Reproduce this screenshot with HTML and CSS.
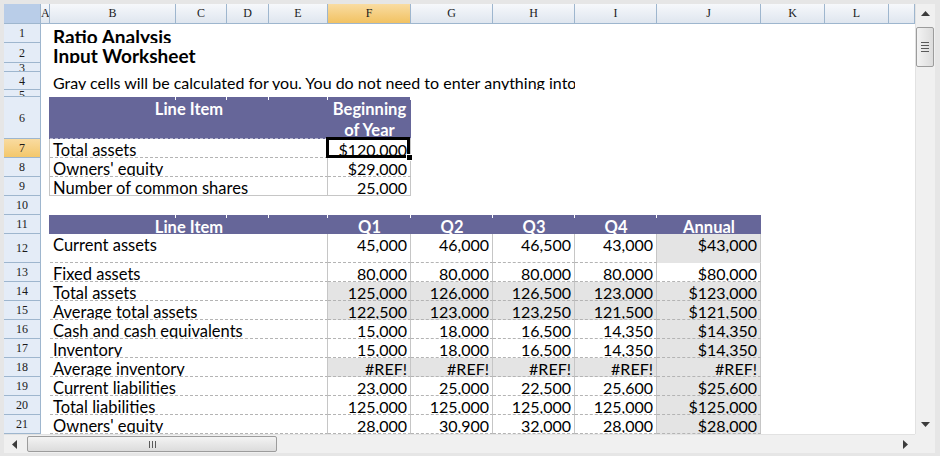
FILE: index.html
```html
<!DOCTYPE html>
<html>
<head>
<meta charset="utf-8">
<title>Ratio Analysis</title>
<link rel="stylesheet" href="styles.css">
</head>
<body>
<div class="window">
  <div class="sheet">
    <div class="row colheads">
      <div class="corner"></div>
      <div class="ch wA">A</div>
      <div class="ch wB">B</div>
      <div class="ch wC">C</div>
      <div class="ch wD">D</div>
      <div class="ch wE">E</div>
      <div class="ch wF sel">F</div>
      <div class="ch wG">G</div>
      <div class="ch wH">H</div>
      <div class="ch wI">I</div>
      <div class="ch wJ">J</div>
      <div class="ch wK">K</div>
      <div class="ch wL">L</div>
      <div class="ch wM"></div>
    </div>

    <div class="row h19">
      <div class="rh">1</div><div class="c wA"></div>
      <div class="c wBH title t1">Ratio Analysis</div>
    </div>
    <div class="row h20">
      <div class="rh">2</div><div class="c wA"></div>
      <div class="c wBH title t2">Input Worksheet</div>
    </div>
    <div class="row h9">
      <div class="rh tiny">3</div>
    </div>
    <div class="row h18">
      <div class="rh">4</div><div class="c wA"></div>
      <div class="c wBH note">Gray cells will be calculated for you. You do not need to enter anything into</div>
    </div>
    <div class="row h7">
      <div class="rh tiny">5</div>
    </div>
    <div class="row h42">
      <div class="rh">6</div><div class="c wA hA"></div>
      <div class="c wBE hd hticks">Line Item</div>
      <div class="c wF hd htick">Beginning<br>of Year</div>
    </div>
    <div class="row h19">
      <div class="rh rsel">7</div><div class="c wA tl"></div>
      <div class="c wBE lab">Total assets</div>
      <div class="c wF num">$120,000</div>
    </div>
    <div class="row h19">
      <div class="rh">8</div><div class="c wA tl"></div>
      <div class="c wBE lab">Owners' equity</div>
      <div class="c wF num">$29,000</div>
    </div>
    <div class="row h19">
      <div class="rh">9</div><div class="c wA tl"></div>
      <div class="c wBE lab last">Number of common shares</div>
      <div class="c wF num last">25,000</div>
    </div>
    <div class="row h19">
      <div class="rh">10</div>
    </div>
    <div class="row h19">
      <div class="rh">11</div><div class="c wA hA"></div>
      <div class="c wBE hd2 hticks">Line Item</div>
      <div class="c wF hd2 htick">Q1</div>
      <div class="c wG hd2 htick">Q2</div>
      <div class="c wH hd2 htick">Q3</div>
      <div class="c wI hd2 htick">Q4</div>
      <div class="c wJ hd2">Annual</div>
    </div>
    <div class="row h29">
      <div class="rh">12</div><div class="c wA"></div>
      <div class="c wBE lab">Current assets</div>
      <div class="c wF num">45,000</div>
      <div class="c wG num">46,000</div>
      <div class="c wH num">46,500</div>
      <div class="c wI num">43,000</div>
      <div class="c wJ num gr nob">$43,000</div>
    </div>
    <div class="row h19">
      <div class="rh">13</div><div class="c wA"></div>
      <div class="c wBE lab">Fixed assets</div>
      <div class="c wF num">80,000</div>
      <div class="c wG num">80,000</div>
      <div class="c wH num">80,000</div>
      <div class="c wI num">80,000</div>
      <div class="c wJ num">$80,000</div>
    </div>
    <div class="row h19">
      <div class="rh">14</div><div class="c wA"></div>
      <div class="c wBE lab">Total assets</div>
      <div class="c wF num gr">125,000</div>
      <div class="c wG num gr">126,000</div>
      <div class="c wH num gr">126,500</div>
      <div class="c wI num gr">123,000</div>
      <div class="c wJ num gr">$123,000</div>
    </div>
    <div class="row h19">
      <div class="rh">15</div><div class="c wA"></div>
      <div class="c wBE lab">Average total assets</div>
      <div class="c wF num gr">122,500</div>
      <div class="c wG num gr">123,000</div>
      <div class="c wH num gr">123,250</div>
      <div class="c wI num gr">121,500</div>
      <div class="c wJ num gr">$121,500</div>
    </div>
    <div class="row h19">
      <div class="rh">16</div><div class="c wA"></div>
      <div class="c wBE lab">Cash and cash equivalents</div>
      <div class="c wF num">15,000</div>
      <div class="c wG num">18,000</div>
      <div class="c wH num">16,500</div>
      <div class="c wI num">14,350</div>
      <div class="c wJ num gr">$14,350</div>
    </div>
    <div class="row h19">
      <div class="rh">17</div><div class="c wA"></div>
      <div class="c wBE lab">Inventory</div>
      <div class="c wF num">15,000</div>
      <div class="c wG num">18,000</div>
      <div class="c wH num">16,500</div>
      <div class="c wI num">14,350</div>
      <div class="c wJ num gr">$14,350</div>
    </div>
    <div class="row h19">
      <div class="rh">18</div><div class="c wA"></div>
      <div class="c wBE lab">Average inventory</div>
      <div class="c wF num gr">#REF!</div>
      <div class="c wG num gr">#REF!</div>
      <div class="c wH num gr">#REF!</div>
      <div class="c wI num gr">#REF!</div>
      <div class="c wJ num gr">#REF!</div>
    </div>
    <div class="row h19">
      <div class="rh">19</div><div class="c wA"></div>
      <div class="c wBE lab">Current liabilities</div>
      <div class="c wF num">23,000</div>
      <div class="c wG num">25,000</div>
      <div class="c wH num">22,500</div>
      <div class="c wI num">25,600</div>
      <div class="c wJ num gr">$25,600</div>
    </div>
    <div class="row h19">
      <div class="rh">20</div><div class="c wA"></div>
      <div class="c wBE lab">Total liabilities</div>
      <div class="c wF num">125,000</div>
      <div class="c wG num">125,000</div>
      <div class="c wH num">125,000</div>
      <div class="c wI num">125,000</div>
      <div class="c wJ num gr">$125,000</div>
    </div>
    <div class="row h19">
      <div class="rh">21</div><div class="c wA"></div>
      <div class="c wBE lab">Owners' equity</div>
      <div class="c wF num">28,000</div>
      <div class="c wG num">30,900</div>
      <div class="c wH num">32,000</div>
      <div class="c wI num">28,000</div>
      <div class="c wJ num gr">$28,000</div>
    </div>

    <div class="selbox"><div class="handle"></div></div>
  </div>

  <div class="vscroll">
    <div class="sbtn">
      <svg width="9" height="5" viewBox="0 0 9 5"><path d="M0 5 L4.5 0 L9 5 Z" fill="#3c3c3c"/></svg>
    </div>
    <div class="vtrack">
      <div class="vthumb"><span></span><span></span><span></span><span></span></div>
    </div>
    <div class="sbtn">
      <svg width="9" height="5" viewBox="0 0 9 5"><path d="M0 0 L9 0 L4.5 5 Z" fill="#3c3c3c"/></svg>
    </div>
  </div>

  <div class="hscroll">
    <div class="hbtn">
      <svg width="5" height="9" viewBox="0 0 5 9"><path d="M5 0 L5 9 L0 4.5 Z" fill="#3c3c3c"/></svg>
    </div>
    <div class="htrack">
      <div class="hthumb"><span></span><span></span><span></span></div>
    </div>
    <div class="hbtn">
      <svg width="5" height="9" viewBox="0 0 5 9"><path d="M0 0 L5 4.5 L0 9 Z" fill="#3c3c3c"/></svg>
    </div>
  </div>
  <div class="scorner"></div>
</div>
</body>
</html>
```

FILE: styles.css
```css
html, body {
  margin: 0;
  padding: 0;
  background: #ffffff;
}

.window {
  width: 940px;
  height: 456px;
  box-sizing: border-box;
  padding: 4px 5px 3px 4px;
  background: #e6e6e6;
  display: grid;
  grid-template-columns: 911px 20px;
  grid-template-rows: 430px 19px;
  overflow: hidden;
}

.sheet {
  position: relative;
  overflow: hidden;
  background: #ffffff;
  display: flex;
  flex-direction: column;
  font-family: Lato, "Open Sans", sans-serif;
  color: #000;
}

.row {
  display: flex;
  flex: none;
}

.h7 { height: 7px; }
.h9 { height: 9px; }
.h18 { height: 18px; }
.h19 { height: 19px; }
.h20 { height: 20px; }
.h29 { height: 29px; }
.h42 { height: 42px; }

/* column headers */
.colheads {
  height: 20px;
}

.corner {
  flex: none;
  width: 37px;
  box-sizing: border-box;
  background: #b9cde8;
  border-right: 1px solid #9eb6ce;
  border-bottom: 1px solid #9eb6ce;
}

.ch {
  flex: none;
  box-sizing: border-box;
  height: 20px;
  border-right: 1px solid #9eb6ce;
  border-bottom: 1px solid #9eb6ce;
  background: linear-gradient(#f6f8fb, #dfe6ef);
  font: 12px "Liberation Serif", serif;
  color: #1a1a1a;
  text-align: center;
  line-height: 19px;
  overflow: hidden;
}

.ch.sel {
  background: linear-gradient(#f9dca2, #f2c262);
}

/* column widths */
.wA { width: 9px; }
.wB { width: 126px; }
.wC { width: 51px; }
.wD { width: 42px; }
.wE { width: 59px; }
.wF { width: 83px; }
.wG { width: 82px; }
.wH { width: 82px; }
.wI { width: 82px; }
.wJ { width: 104px; }
.wK { width: 64px; }
.wL { width: 64px; }
.wM { flex: 1 0 auto; }
.wBE { width: 278px; }
.wBH { width: 525px; }

/* row headers */
.rh {
  flex: none;
  width: 37px;
  box-sizing: border-box;
  height: 100%;
  background: #e4ecf7;
  border-right: 1px solid #9eb6ce;
  border-bottom: 1px solid #9eb6ce;
  font: 12px "Liberation Serif", serif;
  color: #1a1a1a;
  line-height: 14px;
  display: flex;
  align-items: center;
  justify-content: center;
  overflow: hidden;
}

.rh.tiny {
  align-items: flex-start;
  line-height: 10px;
}

.rh.rsel {
  background: linear-gradient(#f9dba0, #f3c76b);
}

/* cells */
.c {
  flex: none;
  box-sizing: border-box;
  height: 100%;
  overflow: hidden;
  white-space: nowrap;
  padding: 2px 3px 0 3px;
  font-size: 16.5px;
  line-height: 18px;
}

.title {
  font-weight: 700;
  font-size: 19px;
}

.title.t1 { padding-top: 4px; }
.title.t2 { padding-top: 4px; }

.note {
  padding-top: 3px;
  line-height: 16px;
  font-size: 16px;
}

/* table headers */
.hA {
  border-right: 1px solid #666699;
}

.hd, .hd2 {
  background-color: #666699;
  color: #ffffff;
  font-weight: 700;
  font-size: 16.5px;
  text-align: center;
  white-space: normal;
}

.hd {
  line-height: 21px;
  padding-top: 2px;
  border-bottom: 1px dashed #b9b9d0;
}

.hd2 {
  padding-top: 3px;
}

.htick {
  background-image: linear-gradient(#ffffff, #ffffff);
  background-size: 1px 3px;
  background-position: right top;
  background-repeat: no-repeat;
}

.hticks {
  background-image:
    linear-gradient(#ffffff, #ffffff),
    linear-gradient(#ffffff, #ffffff),
    linear-gradient(#ffffff, #ffffff),
    linear-gradient(#ffffff, #ffffff);
  background-size: 1px 3px;
  background-position: 125px 0, 176px 0, 218px 0, 277px 0;
  background-repeat: no-repeat;
}

/* table bodies */
.tl {
  border-right: 1px solid #c6c6c6;
}

.lab {
  border-right: 1px solid #c6c6c6;
  border-bottom: 1px dashed #b4b4b4;
}

.num {
  font-size: 16px;
  text-align: right;
  border-right: 1px solid #c6c6c6;
  border-bottom: 1px dashed #b4b4b4;
}

.last {
  border-bottom: 1px solid #c6c6c6;
}

.gr {
  background: #e4e4e4;
}

.nob {
  border-bottom-color: transparent;
}

/* selection */
.selbox {
  position: absolute;
  left: 322px;
  top: 133px;
  width: 84px;
  height: 21px;
  box-sizing: border-box;
  border: 3px solid #000;
}

.handle {
  position: absolute;
  right: -6px;
  bottom: -6px;
  width: 5px;
  height: 5px;
  background: #000;
  border: 1px solid #fff;
}

/* vertical scrollbar */
.vscroll {
  background: #f0f0f0;
  display: flex;
  flex-direction: column;
  border-left: 1px solid #e2e2e2;
  box-sizing: border-box;
}

.sbtn {
  flex: none;
  height: 19px;
  display: flex;
  align-items: center;
  justify-content: center;
}

.vtrack {
  flex: 1;
  padding-top: 4px;
}

.vthumb {
  margin: 0 1px 0 0;
  height: 40px;
  box-sizing: border-box;
  border: 1px solid #9c9c9c;
  border-radius: 2px;
  background: linear-gradient(90deg, #f3f3f3, #dcdcdc);
  display: flex;
  flex-direction: column;
  align-items: center;
  justify-content: center;
  gap: 2px;
}

.vthumb span {
  display: block;
  width: 8px;
  height: 1px;
  background: #5a5a5a;
}

/* horizontal scrollbar */
.hscroll {
  background: #f0f0f0;
  display: flex;
  border-top: 1px solid #e2e2e2;
  box-sizing: border-box;
}

.hbtn {
  flex: none;
  width: 20px;
  display: flex;
  align-items: center;
  justify-content: center;
}

.htrack {
  flex: 1;
  padding: 1px 0 1px 3px;
}

.hthumb {
  width: 250px;
  height: 100%;
  box-sizing: border-box;
  border: 1px solid #9c9c9c;
  border-radius: 2px;
  background: linear-gradient(#f3f3f3, #dcdcdc);
  display: flex;
  align-items: center;
  justify-content: center;
  gap: 2px;
}

.hthumb span {
  display: block;
  width: 1px;
  height: 7px;
  background: #5a5a5a;
}

.scorner {
  background: #f0f0f0;
}
```
